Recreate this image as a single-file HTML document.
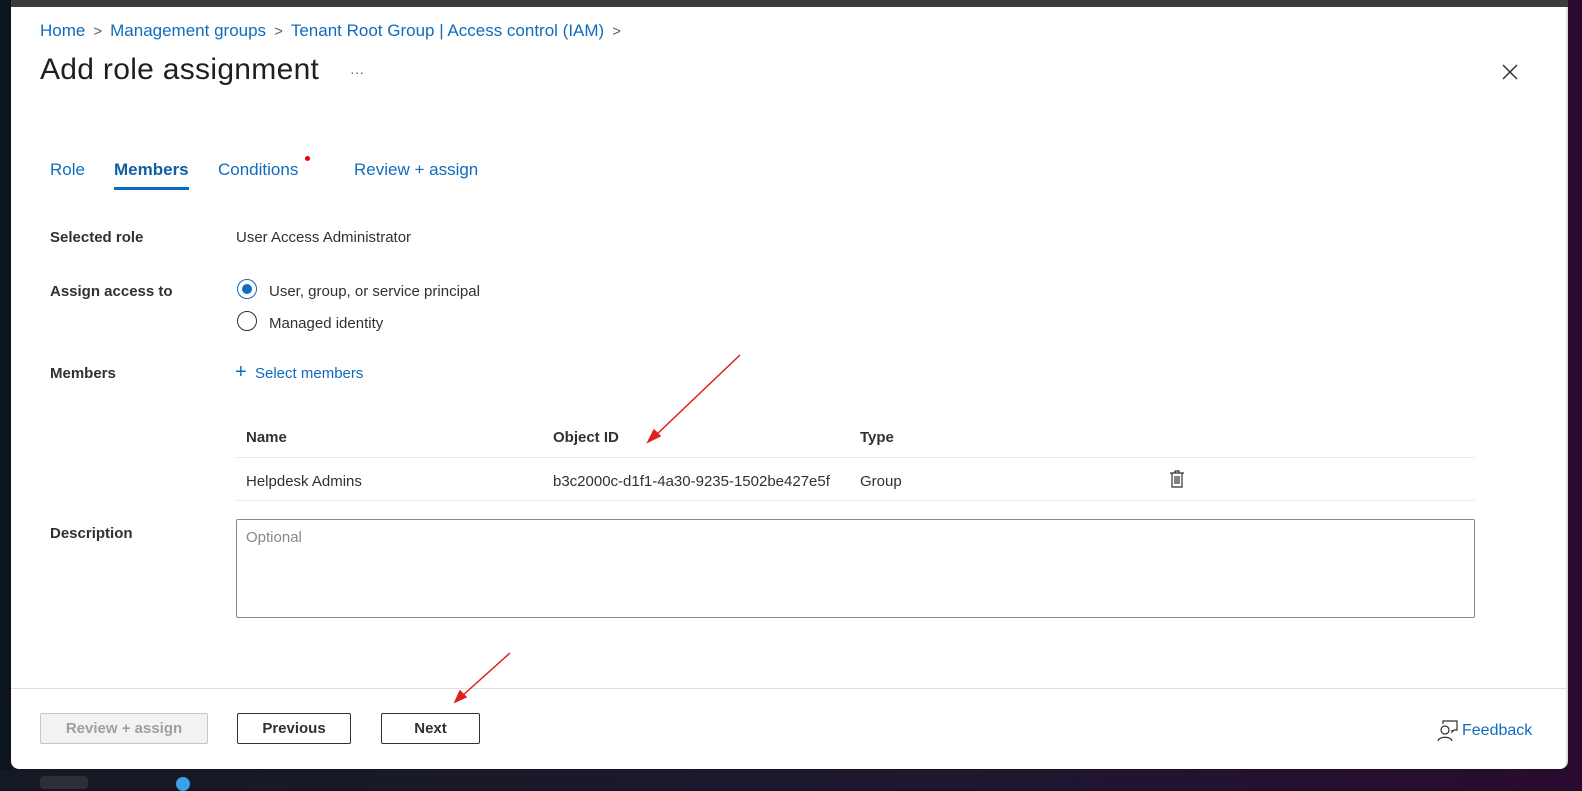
<!DOCTYPE html>
<html><head><meta charset="utf-8"><style>
*{margin:0;padding:0;box-sizing:border-box}
body{width:1582px;height:789px;overflow:hidden;background:#1d0f22;font-family:"Segoe UI","Liberation Sans",sans-serif;position:relative;color:#323130}
.topbar{position:absolute;left:0;top:0;width:1582px;height:7px;background:#3b3b3b}
.leftbar{position:absolute;left:0;top:0;width:11px;height:789px;background:#0d151c}
.rightbar{position:absolute;left:1568px;top:0;width:14px;height:789px;background:#2a0a30}
.bottombar{position:absolute;left:0;top:770px;width:1582px;height:19px;background:linear-gradient(90deg,#141a24,#1e1830 60%,#2a0a30)}
.panel{position:absolute;left:11px;top:7px;width:1557px;height:762px;background:#fff;border-radius:0 0 8px 8px;border-right:2px solid #ddd}
.a{position:absolute;white-space:nowrap}
.bc{font-size:17px;color:#0f6cbd;top:21px}
.bc span{color:#605e5c;margin:0 8px;font-size:15px}
h1{position:absolute;left:40px;top:53px;font-size:30px;font-weight:400;color:#201f1e;letter-spacing:.3px}
.tab{font-size:17px;color:#0f6cbd;top:160px}
.lbl{font-size:15px;font-weight:700;color:#323130}
.val{font-size:15px;color:#323130}
.radio{position:absolute;width:20px;height:20px;border:1px solid #323130;border-radius:50%}
.btn{position:absolute;top:713px;height:31px;border:1px solid #323130;border-radius:2px;font-size:15px;font-weight:700;text-align:center;line-height:29px;background:#fff}
</style></head><body>
<div class="topbar"></div><div class="leftbar"></div><div class="rightbar"></div><div class="bottombar"></div>
<div style="position:absolute;left:40px;top:776px;width:48px;height:13px;background:#2a2f38;border-radius:4px"></div>
<div style="position:absolute;left:176px;top:777px;width:14px;height:14px;background:#3aa0e8;border-radius:50%"></div>
<div class="panel"></div>
<div class="a bc" style="left:40px">Home<span>&gt;</span>Management groups<span>&gt;</span>Tenant Root Group | Access control (IAM)<span>&gt;</span></div>
<h1>Add role assignment</h1>
<div class="a" style="left:350px;top:64px;font-size:14px;color:#605e5c">···</div>
<svg class="a" style="left:1502px;top:64px" width="16" height="16"><path d="M1 1L15 15M15 1L1 15" stroke="#323130" stroke-width="1.5"/></svg>
<div class="a tab" style="left:50px">Role</div>
<div class="a tab" style="left:114px;font-weight:700;color:#115ea3">Members</div>
<div class="a" style="left:114px;top:187px;width:75px;height:3px;background:#0f6cbd"></div>
<div class="a tab" style="left:218px">Conditions</div>
<div class="a" style="left:305px;top:156px;width:5px;height:5px;background:#e00;border-radius:50%"></div>
<div class="a tab" style="left:354px">Review + assign</div>
<div class="a lbl" style="left:50px;top:229px">Selected role</div>
<div class="a val" style="left:236px;top:229px">User Access Administrator</div>
<div class="a lbl" style="left:50px;top:283px">Assign access to</div>
<div class="radio" style="left:237px;top:279px;border-color:#0f6cbd"><div style="position:absolute;left:4px;top:4px;width:10px;height:10px;border-radius:50%;background:#0f6cbd"></div></div>
<div class="a val" style="left:269px;top:283px">User, group, or service principal</div>
<div class="radio" style="left:237px;top:311px"></div>
<div class="a val" style="left:269px;top:315px">Managed identity</div>
<div class="a lbl" style="left:50px;top:365px">Members</div>
<div class="a" style="left:235px;top:362px;font-size:20px;color:#0f6cbd;line-height:20px">+</div>
<div class="a val" style="left:255px;top:365px;color:#0f6cbd">Select members</div>
<div class="a lbl" style="left:246px;top:429px">Name</div>
<div class="a lbl" style="left:553px;top:429px">Object ID</div>
<div class="a lbl" style="left:860px;top:429px">Type</div>
<div class="a" style="left:236px;top:457px;width:1239px;height:1px;background:#edebe9"></div>
<div class="a val" style="left:246px;top:473px">Helpdesk Admins</div>
<div class="a val" style="left:553px;top:473px">b3c2000c-d1f1-4a30-9235-1502be427e5f</div>
<div class="a val" style="left:860px;top:473px">Group</div>
<svg class="a" style="left:1169px;top:470px" width="16" height="18"><path d="M1 3H15M6 3V1H10V3M3 3V17H13V3M6 6V14M8 6V14M10 6V14" fill="none" stroke="#323130" stroke-width="1.2"/></svg>
<div class="a" style="left:236px;top:500px;width:1239px;height:1px;background:#edebe9"></div>
<div class="a lbl" style="left:50px;top:525px">Description</div>
<div class="a" style="left:236px;top:519px;width:1239px;height:99px;border:1px solid #8a8886;border-radius:2px"></div>
<div class="a val" style="left:246px;top:529px;color:#8a8886">Optional</div>
<div class="a" style="left:11px;top:688px;width:1557px;height:1px;background:#e1dfdd"></div>
<div class="btn" style="left:40px;width:168px;background:#f3f2f1;border-color:#c8c6c4;color:#a19f9d">Review + assign</div>
<div class="btn" style="left:237px;width:114px">Previous</div>
<div class="btn" style="left:381px;width:99px">Next</div>
<svg class="a" style="left:1437px;top:720px" width="22" height="22" fill="none" stroke="#323130" stroke-width="1.2"><circle cx="8" cy="10" r="4"/><path d="M1 21C2 16 14 16 15 21M6 4V1H20V10H17L15 12V10"/></svg>
<div class="a val" style="left:1462px;top:722px;color:#0f6cbd;font-size:16px">Feedback</div>
<svg class="a" style="left:0;top:0" width="1582" height="789"><g stroke="#e02020" stroke-width="1.5" fill="#e02020"><path d="M740 355L655 436" fill="none"/><path d="M648 442L654 430L660 436Z"/><path d="M510 653L462 696" fill="none"/><path d="M455 702L460 691L466 697Z"/></g></svg>
</body></html>
